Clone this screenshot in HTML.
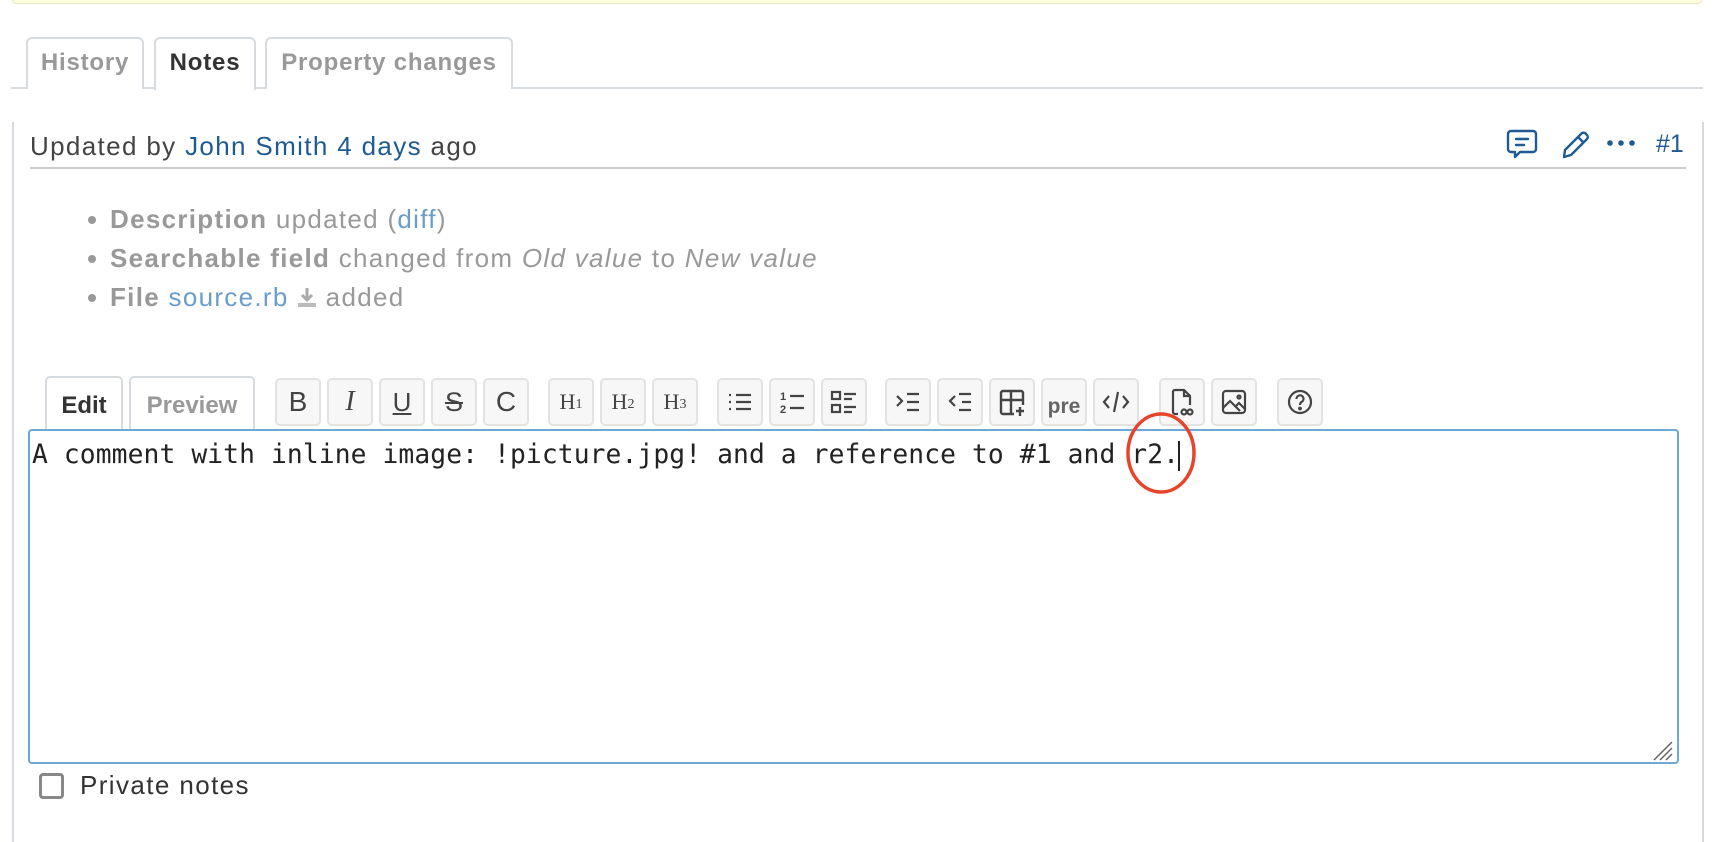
<!DOCTYPE html>
<html><head><meta charset="utf-8"><style>
*{box-sizing:border-box;margin:0;padding:0}
body{width:1725px;height:823px;overflow:hidden;background:#fff;font-family:"Liberation Sans",sans-serif;position:relative;color:#333}
.abs{position:absolute}
.topbox{left:12px;top:-20px;width:1690px;height:24px;background:#ffffdd;border:1px solid #e6e6c0;border-radius:4px}
.tabline{left:11px;top:87px;width:1692px;height:2px;background:#d6dbe0}
.tab{top:37px;height:52px;border:2px solid #d6dbe0;border-bottom:none;border-radius:6px 6px 0 0;background:#fff;font-size:24px;letter-spacing:0.8px;font-weight:bold;color:#999;text-align:center;line-height:48px;white-space:nowrap}
.journal{left:12px;top:122px;width:1692px;height:720px;border-left:2px solid #d6dbe0;border-right:2px solid #d6dbe0;background:#fff}
.hdr{left:30px;top:131px;font-size:26px;letter-spacing:1.35px;color:#444;white-space:nowrap}
.hdr a{color:#1f5a92;text-decoration:none}
.hline{left:30px;top:167px;width:1656px;height:2px;background:#ccc}
ul{position:absolute;left:110px;top:203px;font-size:26px;letter-spacing:1.3px;color:#999;list-style:none}
li{height:39px;line-height:32px;position:relative;white-space:nowrap}
li:before{content:"";position:absolute;left:-22px;top:13px;width:8px;height:8px;border-radius:50%;background:#999}
li a{color:#6c9cc8}
.etab{top:376px;height:55px;border:2px solid #d6dbe0;border-bottom:none;border-radius:5px 5px 0 0;background:#fff;font-size:24px;font-weight:bold;text-align:center;line-height:56px}
.btn{top:378px;width:46px;height:48px;border:2px solid #e3e3e3;border-radius:5px;background:#f7f7f7;display:flex;align-items:center;justify-content:center;color:#444}
.btn svg{width:30px;height:30px}
.ta{left:28px;top:429px;width:1651px;height:335px;border:2px solid #6ea8d4;border-radius:4px;background:#fff}
.txt{left:32px;top:440px;font-family:"DejaVu Sans Mono","Liberation Mono",monospace;font-size:26.3px;color:#222;white-space:pre;letter-spacing:0.1px}
</style></head><body>
<div class="abs topbox"></div>
<div class="abs tabline"></div>
<div class="abs tab" style="left:26px;width:118px">History</div>
<div class="abs tab" style="left:154px;width:102px;color:#333;height:53px">Notes</div>
<div class="abs tab" style="left:265px;width:248px">Property changes</div>

<div class="abs journal"></div>
<div class="abs hdr">Updated by <a>John Smith</a> <a>4 days</a> ago</div>
<svg class="abs" style="left:1506px;top:129px" width="32" height="30" viewBox="0 0 32 30" fill="none" stroke="#1f5a92" stroke-width="2.4" stroke-linejoin="round" stroke-linecap="round"><path d="M5 2h22a3 3 0 0 1 3 3v15a3 3 0 0 1-3 3H14l-5 5v-5H5a3 3 0 0 1-3-3V5a3 3 0 0 1 3-3z"/><path d="M10 10h12M10 16h8"/></svg>
<svg class="abs" style="left:1561px;top:130px" width="30" height="30" viewBox="0 0 30 30" fill="none" stroke="#1f5a92" stroke-width="2.4" stroke-linejoin="round"><path d="M3 27l1-7L20 4a3 3 0 0 1 5 0l1 1a3 3 0 0 1 0 4L10 25z"/><path d="M17 7l5 5"/></svg>
<svg class="abs" style="left:1606px;top:138px" width="32" height="10"><circle cx="4" cy="5" r="2.8" fill="#1f5a92"/><circle cx="15" cy="5" r="2.8" fill="#1f5a92"/><circle cx="26" cy="5" r="2.8" fill="#1f5a92"/></svg>
<div class="abs" style="left:1656px;top:130px;font-size:25px;color:#1f5a92">#1</div>
<div class="abs hline"></div>

<ul>
<li><b>Description</b> updated (<a>diff</a>)</li>
<li><b>Searchable field</b> changed from <i>Old value</i> to <i>New value</i></li>
<li><b>File</b> <a>source.rb</a> <svg width="20" height="22" viewBox="0 0 20 22" style="vertical-align:-2px"><path d="M10 2v12M5 9l5 5 5-5" stroke="#aaa" stroke-width="3" fill="none"/><rect x="1" y="17" width="18" height="4" fill="#bbb"/></svg> added</li>
</ul>

<div class="abs etab" style="left:45px;width:78px;color:#333;height:56px">Edit</div>
<div class="abs etab" style="left:129px;width:126px;color:#999">Preview</div>

<div class="abs btn" style="left:275px;font-size:28px">B</div>
<div class="abs btn" style="left:327px;font-size:28px;font-style:italic;font-family:'Liberation Serif',serif">I</div>
<div class="abs btn" style="left:379px;font-size:26px;text-decoration:underline">U</div>
<div class="abs btn" style="left:431px;font-size:27px;text-decoration:line-through">S</div>
<div class="abs btn" style="left:483px;font-size:28px">C</div>
<div class="abs btn" style="left:548px;font-size:22px;font-family:'Liberation Serif',serif">H<span style="font-size:14px;margin-top:6px">1</span></div>
<div class="abs btn" style="left:600px;font-size:22px;font-family:'Liberation Serif',serif">H<span style="font-size:14px;margin-top:6px">2</span></div>
<div class="abs btn" style="left:652px;font-size:22px;font-family:'Liberation Serif',serif">H<span style="font-size:14px;margin-top:6px">3</span></div>
<div class="abs btn" style="left:717px"><svg viewBox="0 0 30 30" fill="none" stroke="#444" stroke-width="2.2"><path d="M11 8h15M11 15h15M11 22h15M4 8h2M4 15h2M4 22h2"/></svg></div>
<div class="abs btn" style="left:769px"><svg viewBox="0 0 30 30" fill="none" stroke="#444" stroke-width="2.2"><path d="M13 9h14M13 21h14"/><text x="3" y="13" font-size="11" font-weight="bold" fill="#444" stroke="none" font-family="Liberation Sans">1</text><text x="3" y="26" font-size="11" font-weight="bold" fill="#444" stroke="none" font-family="Liberation Sans">2</text></svg></div>
<div class="abs btn" style="left:821px"><svg viewBox="0 0 30 30" fill="none" stroke="#444" stroke-width="2.2"><rect x="3" y="5" width="8" height="7"/><rect x="3" y="18" width="8" height="7"/><path d="M15 7h12M15 12h8M15 20h12M15 25h8"/></svg></div>
<div class="abs btn" style="left:885px"><svg viewBox="0 0 30 30" fill="none" stroke="#444" stroke-width="2.2"><path d="M4 9l5 5-5 5M14 7h12M14 15h12M14 23h12"/></svg></div>
<div class="abs btn" style="left:937px"><svg viewBox="0 0 30 30" fill="none" stroke="#444" stroke-width="2.2"><path d="M10 9l-5 5 5 5M14 7h12M17 15h9M14 23h12"/></svg></div>
<div class="abs btn" style="left:989px"><svg viewBox="0 0 30 30" fill="none" stroke="#444" stroke-width="2.4"><path d="M17 27H6a2 2 0 0 1-2-2V6a2 2 0 0 1 2-2h18a2 2 0 0 1 2 2v12M4 13h22M14 4v23M23 20v9M19 24h8"/></svg></div>
<div class="abs btn" style="left:1041px;font-size:21px;font-weight:bold;color:#666;padding-top:10px">pre</div>
<div class="abs btn" style="left:1093px"><svg viewBox="0 0 30 30" fill="none" stroke="#444" stroke-width="2.2"><path d="M8 9l-5 6 5 6M22 9l5 6-5 6M17 5l-4 20"/></svg></div>
<div class="abs btn" style="left:1159px"><svg viewBox="0 0 30 30" fill="none" stroke="#444" stroke-width="2.2"><path d="M11 27H8a2 2 0 0 1-2-2V5a2 2 0 0 1 2-2h9l6 6v9M17 3v6h6"/><circle cx="17" cy="25" r="2.5"/><circle cx="23" cy="25" r="2.5"/></svg></div>
<div class="abs btn" style="left:1211px"><svg viewBox="0 0 30 30" fill="none" stroke="#444" stroke-width="2.2"><rect x="4" y="4" width="22" height="22" rx="3"/><path d="M4 21l7-7 10 10M17 19l3-3 6 6"/><circle cx="20" cy="10" r="1.5"/></svg></div>
<div class="abs btn" style="left:1277px"><svg viewBox="0 0 30 30" fill="none" stroke="#444" stroke-width="2.2"><circle cx="15" cy="15" r="11"/><path d="M11.5 12a3.5 3.5 0 1 1 5 3c-1.2.7-1.5 1.3-1.5 3"/><circle cx="15" cy="21.5" r="0.8" fill="#444"/></svg></div>

<div class="abs ta"></div>
<div class="abs txt">A comment with inline image: !picture.jpg! and a reference to #1 and r2.</div>
<div class="abs" style="left:1178px;top:441px;width:2px;height:30px;background:#222"></div>
<svg class="abs" style="left:1124px;top:410px" width="76" height="86"><ellipse cx="37" cy="43" rx="33" ry="39" fill="none" stroke="#e8442c" stroke-width="3.5"/></svg>
<svg class="abs" style="left:1650px;top:738px" width="24" height="24" stroke="#666" stroke-width="1.5"><path d="M22 4L4 22M22 10L10 22M22 16L16 22"/></svg>

<div class="abs" style="left:39px;top:773px;width:25px;height:26px;border:3px solid #888;border-radius:4px;background:#fff"></div>
<div class="abs" style="left:80px;top:770px;font-size:26px;letter-spacing:1.4px;color:#333">Private notes</div>
</body></html>
